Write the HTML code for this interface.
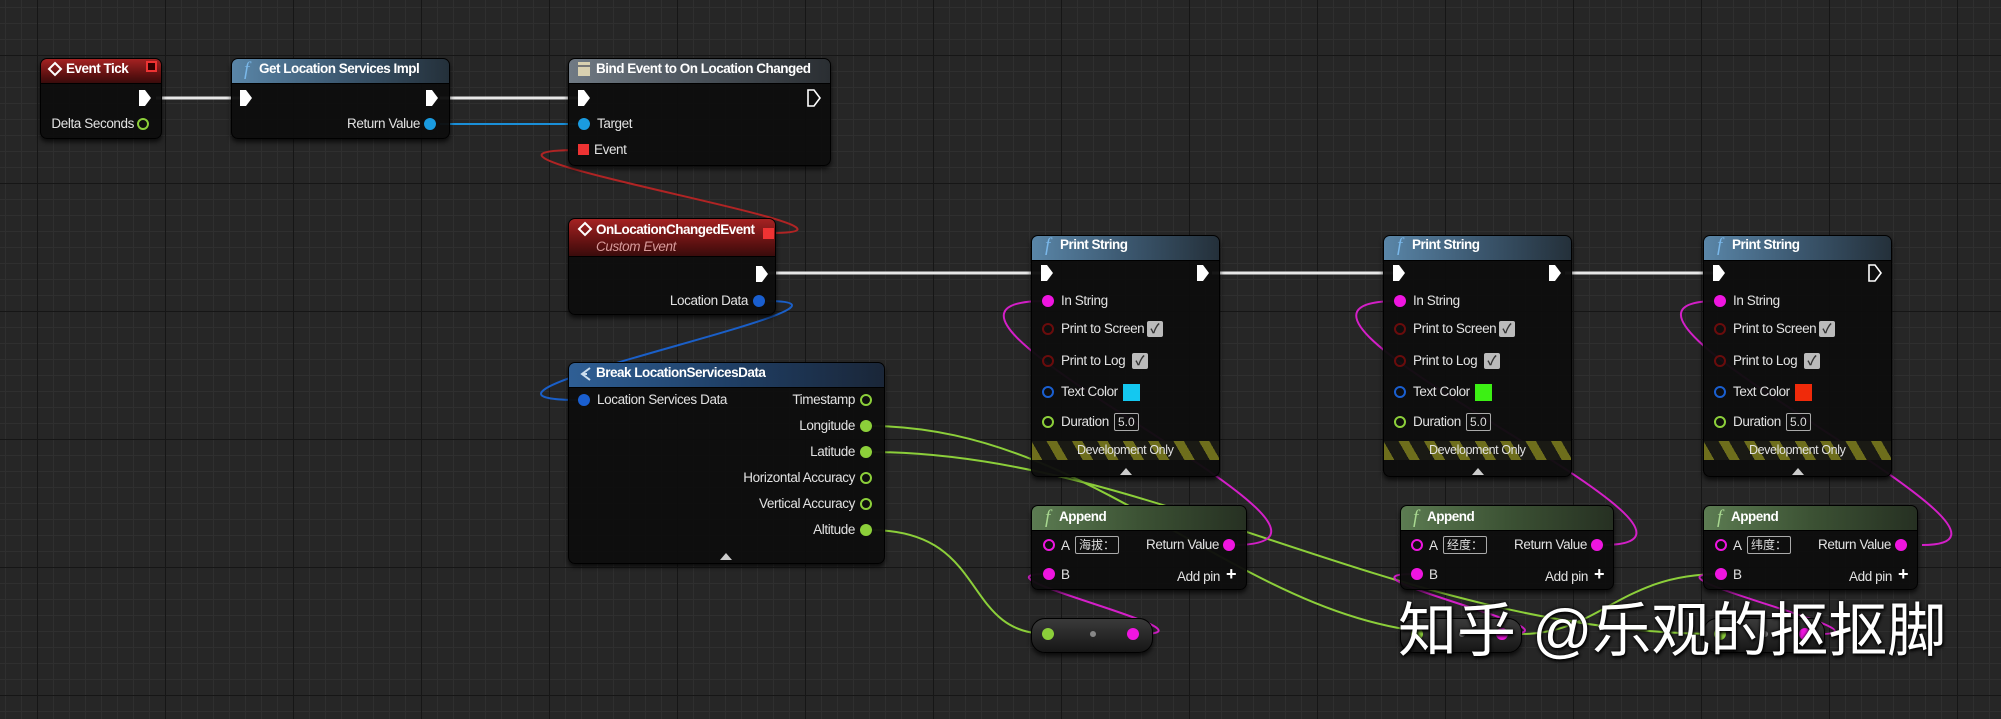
<!DOCTYPE html>
<html><head><meta charset="utf-8"><style>
*{margin:0;padding:0;box-sizing:border-box}
body{width:2001px;height:719px;overflow:hidden;position:relative;font-family:"Liberation Sans","Noto Sans CJK SC",sans-serif;
background-color:#262626;
background-image:
linear-gradient(90deg,#161616 1px,transparent 1px),
linear-gradient(0deg,#161616 1px,transparent 1px),
linear-gradient(90deg,#2f2f2f 1px,transparent 1px),
linear-gradient(0deg,#2f2f2f 1px,transparent 1px);
background-size:128px 128px,128px 128px,16px 16px,16px 16px;
background-position:37px 0,0 56px,5px 0,0 8px;}
.n{position:absolute;background:rgba(14,14,14,.96);border:1px solid #000;border-radius:7px;box-shadow:0 3px 5px rgba(0,0,0,.7);overflow:hidden}
.h{height:25px;border-bottom:1px solid #000}
.red{background:linear-gradient(180deg,#a52222,#5a1010 70%,#3a0c0c)}
.blu{background:linear-gradient(90deg,#5a86a8,#3c5870 50%,#24303a)}
.gry{background:linear-gradient(90deg,#707a84,#4a525a 50%,#2a2e32)}
.bbl{background:linear-gradient(90deg,#2f5f95,#1f3f66 50%,#1a2638)}
.grn{background:linear-gradient(90deg,#5c7c52,#3c5234 50%,#263022)}
.t{position:absolute;font-size:13.5px;letter-spacing:-0.4px;color:#e2e2e2;white-space:nowrap;line-height:18px}
.b{font-weight:bold;color:#fff;letter-spacing:-0.5px}
.w{position:absolute;top:0;width:2001px;height:719px}
.box{position:absolute;border:1px solid #aaa;height:18px;font-size:12px;color:#ddd;line-height:16px;padding:0 3px;border-radius:2px;white-space:nowrap}
.chk{position:absolute;width:16px;height:16px;background:#bbb;border-radius:2px;color:#333;font-size:13px;line-height:16px;text-align:center;font-weight:bold}
.dev{position:absolute;height:19px;background:repeating-linear-gradient(60deg,#6e6e1c 0 9px,#1a1a14 9px 22px)}
.rr{position:absolute;height:35px;border-radius:14px;background:linear-gradient(180deg,#3a3a3a,#161616);border:1px solid #000;box-shadow:0 3px 5px rgba(0,0,0,.7)}
.wm{position:absolute;left:1398px;top:596px;font-size:59px;color:#fff;font-family:"Liberation Sans","Noto Sans CJK SC",sans-serif;text-shadow:0 0 3px #000,1px 2px 3px #000;white-space:nowrap;line-height:70px}
</style></head><body>

<svg width="2001" height="719" style="position:absolute;left:0;top:0" fill="none">
<g stroke="#e8e8e8" stroke-width="3">
<path d="M156 98H246"/><path d="M440 98H582"/><path d="M768 273H1045"/><path d="M1212 273H1398"/><path d="M1565 273H1717"/>
</g>
<path d="M440 124H582" stroke="#1a8fd8" stroke-width="2"/>
<path d="M770 233C920 233 400 150 580 150" stroke="#b02424" stroke-width="2"/>
<path d="M766 301C910 301 400 400 580 400" stroke="#1a5fc8" stroke-width="2"/>
<g stroke="#8ccf3a" stroke-width="2">
<path d="M870 426C1100 426 1250 634 1460 634"/>
<path d="M870 452C1150 452 1400 634 1720 634"/>
<path d="M870 530C990 530 960 634 1048 634"/>
<path d="M1520 634C1600 634 1620 574 1720 574"/>
</g>
<g stroke="#d41fc8" stroke-width="2">
<path d="M1233 545C1420 545 850 301 1045 301"/>
<path d="M1602 545C1780 545 1200 301 1398 301"/>
<path d="M1922 545C2080 545 1540 301 1717 301"/>
<path d="M1140 634C1230 634 960 574 1046 574"/>
<path d="M1505 634C1600 634 1320 574 1414 574"/>
<path d="M1820 634C1900 634 1630 574 1717 574"/>
</g>
</svg>

<div class="n" style="left:40px;top:58px;width:122px;height:81px"><div class="h red"></div></div>
<div class="n" style="left:231px;top:58px;width:219px;height:81px"><div class="h blu"></div></div>
<div class="n" style="left:568px;top:58px;width:263px;height:108px"><div class="h gry"></div></div>
<div class="n" style="left:568px;top:218px;width:208px;height:97px"><div class="h red" style="height:38px"></div></div>
<div class="n" style="left:568px;top:362px;width:317px;height:202px"><div class="h bbl"></div></div>
<div class="n" style="left:1031px;top:235px;width:189px;height:242px"><div class="h blu"></div></div>
<div class="n" style="left:1383px;top:235px;width:189px;height:242px"><div class="h blu"></div></div>
<div class="n" style="left:1703px;top:235px;width:189px;height:242px"><div class="h blu"></div></div>
<div class="n" style="left:1031px;top:505px;width:216px;height:85px"><div class="h grn"></div></div>
<div class="n" style="left:1400px;top:505px;width:214px;height:85px"><div class="h grn"></div></div>
<div class="n" style="left:1703px;top:505px;width:215px;height:85px"><div class="h grn"></div></div>
<div class="rr" style="left:1031px;top:618px;width:122px"></div>
<div class="rr" style="left:1400px;top:618px;width:122px"></div>
<div class="rr" style="left:1703px;top:618px;width:122px"></div>
<div class="dev" style="left:1032px;top:441px;width:187px"></div>
<div class="dev" style="left:1384px;top:441px;width:187px"></div>
<div class="dev" style="left:1704px;top:441px;width:187px"></div>

<div class="t b" style="left:66px;top:60px">Event Tick</div>
<div class="t" style="right:1867px;top:115px">Delta Seconds</div>
<div class="t b" style="left:259px;top:60px">Get Location Services Impl</div>
<div class="t" style="right:1581px;top:115px">Return Value</div>
<div class="t b" style="left:596px;top:60px">Bind Event to On Location Changed</div>
<div class="t" style="left:597px;top:115px">Target</div>
<div class="t" style="left:594px;top:141px">Event</div>
<div class="t b" style="left:596px;top:221px">OnLocationChangedEvent</div>
<div class="t" style="left:596px;top:238px;font-style:italic;color:#d89a9a">Custom Event</div>
<div class="t" style="right:1253px;top:292px">Location Data</div>
<div class="t b" style="left:596px;top:364px">Break LocationServicesData</div>
<div class="t" style="left:597px;top:391px">Location Services Data</div>
<div class="t" style="right:1146px;top:391px">Timestamp</div>
<div class="t" style="right:1146px;top:417px">Longitude</div>
<div class="t" style="right:1146px;top:443px">Latitude</div>
<div class="t" style="right:1146px;top:469px">Horizontal Accuracy</div>
<div class="t" style="right:1146px;top:495px">Vertical Accuracy</div>
<div class="t" style="right:1146px;top:521px">Altitude</div>

<div class="w" style="left:0">
<div class="t b" style="left:1060px;top:236px">Print String</div>
<div class="t" style="left:1061px;top:292px">In String</div>
<div class="t" style="left:1061px;top:320px">Print to Screen</div>
<div class="t" style="left:1061px;top:352px">Print to Log</div>
<div class="t" style="left:1061px;top:383px">Text Color</div>
<div class="t" style="left:1061px;top:413px">Duration</div>
<div class="t" style="left:1077px;top:441px;font-size:12.5px">Development Only</div>
<div class="chk" style="left:1147px;top:321px">✓</div>
<div class="chk" style="left:1132px;top:353px">✓</div>
<div style="position:absolute;left:1123px;top:384px;width:17px;height:17px;background:#14c8f0"></div>
<div class="box" style="left:1114px;top:413px">5.0</div>
</div>
<div class="w" style="left:352px">
<div class="t b" style="left:1060px;top:236px">Print String</div>
<div class="t" style="left:1061px;top:292px">In String</div>
<div class="t" style="left:1061px;top:320px">Print to Screen</div>
<div class="t" style="left:1061px;top:352px">Print to Log</div>
<div class="t" style="left:1061px;top:383px">Text Color</div>
<div class="t" style="left:1061px;top:413px">Duration</div>
<div class="t" style="left:1077px;top:441px;font-size:12.5px">Development Only</div>
<div class="chk" style="left:1147px;top:321px">✓</div>
<div class="chk" style="left:1132px;top:353px">✓</div>
<div style="position:absolute;left:1123px;top:384px;width:17px;height:17px;background:#3cf014"></div>
<div class="box" style="left:1114px;top:413px">5.0</div>
</div>
<div class="w" style="left:672px">
<div class="t b" style="left:1060px;top:236px">Print String</div>
<div class="t" style="left:1061px;top:292px">In String</div>
<div class="t" style="left:1061px;top:320px">Print to Screen</div>
<div class="t" style="left:1061px;top:352px">Print to Log</div>
<div class="t" style="left:1061px;top:383px">Text Color</div>
<div class="t" style="left:1061px;top:413px">Duration</div>
<div class="t" style="left:1077px;top:441px;font-size:12.5px">Development Only</div>
<div class="chk" style="left:1147px;top:321px">✓</div>
<div class="chk" style="left:1132px;top:353px">✓</div>
<div style="position:absolute;left:1123px;top:384px;width:17px;height:17px;background:#f02a0a"></div>
<div class="box" style="left:1114px;top:413px">5.0</div>
</div>

<div class="w" style="left:0">
<div class="t b" style="left:1059px;top:508px">Append</div>
<div class="t" style="left:1061px;top:537px">A</div>
<div class="box" style="left:1075px;top:536px">海拔：</div>
<div class="t" style="right:782px;top:536px">Return Value</div>
<div class="t" style="left:1061px;top:566px">B</div>
<div class="t" style="right:781px;top:568px">Add pin</div>
<div class="t b" style="left:1226px;top:565px;font-size:18px">+</div>
</div>
<div class="w" style="left:368px">
<div class="t b" style="left:1059px;top:508px">Append</div>
<div class="t" style="left:1061px;top:537px">A</div>
<div class="box" style="left:1075px;top:536px">经度：</div>
<div class="t" style="right:782px;top:536px">Return Value</div>
<div class="t" style="left:1061px;top:566px">B</div>
<div class="t" style="right:781px;top:568px">Add pin</div>
<div class="t b" style="left:1226px;top:565px;font-size:18px">+</div>
</div>
<div class="w" style="left:672px">
<div class="t b" style="left:1059px;top:508px">Append</div>
<div class="t" style="left:1061px;top:537px">A</div>
<div class="box" style="left:1075px;top:536px">纬度：</div>
<div class="t" style="right:782px;top:536px">Return Value</div>
<div class="t" style="left:1061px;top:566px">B</div>
<div class="t" style="right:781px;top:568px">Add pin</div>
<div class="t b" style="left:1226px;top:565px;font-size:18px">+</div>
</div>

<svg width="2001" height="719" style="position:absolute;left:0;top:0">
<defs>
<path id="ex" d="M-6 -8H0L6 0L0 8H-6Z" fill="#fff"/>
<path id="exo" d="M-6 -8H0L6 0L0 8H-6Z" fill="none" stroke="#fff" stroke-width="1.6"/>
</defs>
<g>
<use href="#ex" x="145" y="98"/><use href="#ex" x="246" y="98"/><use href="#ex" x="432" y="98"/>
<use href="#ex" x="584" y="98"/><use href="#exo" x="814" y="98"/>
<use href="#ex" x="762" y="274"/>
<use href="#ex" x="1047" y="273"/><use href="#ex" x="1203" y="273"/>
<use href="#ex" x="1399" y="273"/><use href="#ex" x="1555" y="273"/>
<use href="#ex" x="1719" y="273"/><use href="#exo" x="1875" y="273"/>
</g>
<g fill="none" stroke="#fff" stroke-width="2">
<path d="M55 63L61 69L55 75L49 69Z"/><path d="M585 223L591 229L585 235L579 229Z"/>
</g>
<rect x="147" y="62" width="9" height="9" fill="#300" stroke="#e33" stroke-width="2"/>
<rect x="763" y="228" width="11" height="11" fill="#e33"/>
<rect x="578" y="144" width="11" height="11" fill="#e33"/>
<rect x="578" y="62" width="12" height="14" fill="#d8d0b0"/><rect x="578" y="65" width="12" height="2" fill="#777"/>
<g font-family="Liberation Serif,serif" font-style="italic" font-size="19" fill="#7ab8ea">
<text x="244" y="75">f</text><text x="1045" y="251">f</text><text x="1397" y="251">f</text><text x="1717" y="251">f</text>
</g>
<g font-family="Liberation Serif,serif" font-style="italic" font-size="19" fill="#a8d890">
<text x="1045" y="523">f</text><text x="1413" y="523">f</text><text x="1717" y="523">f</text>
</g>
<path d="M590 368L582 374L590 380M582 374H587" stroke="#cde" stroke-width="2" fill="none"/>
<g>
<circle cx="143" cy="124" r="5" fill="none" stroke="#8ccf3a" stroke-width="2"/>
<circle cx="430" cy="124" r="6" fill="#1a9be0"/>
<circle cx="584" cy="124" r="6" fill="#1a9be0"/>
<circle cx="759" cy="301" r="6" fill="#1a5fd0"/>
<circle cx="584" cy="400" r="6" fill="#1a5fd0"/>
<g fill="none" stroke="#8ccf3a" stroke-width="2">
<circle cx="866" cy="400" r="5"/><circle cx="866" cy="478" r="5"/><circle cx="866" cy="504" r="5"/>
</g>
<g fill="#8ccf3a"><circle cx="866" cy="426" r="6"/><circle cx="866" cy="452" r="6"/><circle cx="866" cy="530" r="6"/></g>
</g>
<g id="ps">
<circle cx="1048" cy="301" r="6" fill="#ef15e0"/>
<circle cx="1048" cy="329" r="5" fill="none" stroke="#6a0c0c" stroke-width="2"/>
<circle cx="1048" cy="361" r="5" fill="none" stroke="#6a0c0c" stroke-width="2"/>
<circle cx="1048" cy="392" r="5" fill="none" stroke="#1a5fd0" stroke-width="2"/>
<circle cx="1048" cy="422" r="5" fill="none" stroke="#8ccf3a" stroke-width="2"/>
<path d="M1120 475L1126 468L1132 475Z" fill="#ccc"/>
</g>
<use href="#ps" x="352"/><use href="#ps" x="672"/>
<g id="ap">
<circle cx="1049" cy="545" r="5" fill="none" stroke="#ef15e0" stroke-width="2"/>
<circle cx="1049" cy="574" r="6" fill="#ef15e0"/>
<circle cx="1229" cy="545" r="6" fill="#ef15e0"/>
</g>
<use href="#ap" x="368"/><use href="#ap" x="672"/>
<path d="M720 560L726 553L732 560Z" fill="#ccc"/>
<g id="rp">
<circle cx="1048" cy="634" r="6" fill="#8ccf3a"/><circle cx="1093" cy="634" r="3" fill="#888"/><circle cx="1133" cy="634" r="6" fill="#ef15e0"/>
</g>
<use href="#rp" x="369"/><use href="#rp" x="672"/>
</svg>

<div class="wm">知乎 @乐观的抠抠脚</div>
</body></html>
